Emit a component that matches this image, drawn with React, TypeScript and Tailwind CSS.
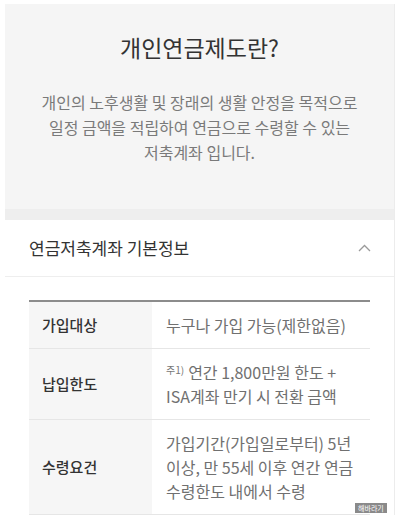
const font = { fontFamily: '"Noto Sans CJK KR", "Noto Sans", sans-serif' };

const rows = [
  { label: "가입대상", lines: ["누구나 가입 가능(제한없음)"] },
  { label: "납입한도", note: "주1)", lines: ["연간 1,800만원 한도 +", "ISA계좌 만기 시 전환 금액"] },
  { label: "수령요건", lines: ["가입기간(가입일로부터) 5년", "이상, 만 55세 이후 연간 연금", "수령한도 내에서 수령"] },
];

export default function App() {
  return (
    <div
      className="relative h-[522px] w-[400px] overflow-hidden bg-white pt-[4px] pl-[5px]"
      style={font}
    >
      <div className="w-[390px] border-r border-[#ececec]">
        {/* intro */}
        <section className="bg-[#f5f5f5] px-2 pt-[27px] pb-[44px] text-center">
          <h1 className="text-[23px] leading-[32px] font-normal text-[#333]">개인연금제도란?</h1>
          <p className="mt-[27px] text-[16px] leading-[25px] text-[#7a7a7a]">
            개인의 노후생활 및 장래의 생활 안정을 목적으로
            <br />
            일정 금액을 적립하여 연금으로 수령할 수 있는
            <br />
            저축계좌 입니다.
          </p>
        </section>
        <div className="h-[11px] bg-[#eeeeee]" />

        {/* accordion header */}
        <div className="flex h-[57px] items-center justify-between border-b border-[#eeeeee] pl-[24px] pr-[23px]">
          <span className="text-[17px] text-[#333]">연금저축계좌 기본정보</span>
          <svg width="13" height="8" viewBox="0 0 13 8" fill="none">
            <path d="M1 7L6.5 1.5L12 7" stroke="#9a9a9a" strokeWidth="1.3" />
          </svg>
        </div>

        {/* table */}
        <div className="px-[24px] pt-[23px]">
          <div className="border-t-2 border-[#8c8c8c]">
            {rows.map((r) => (
              <div key={r.label} className="flex border-b border-[#e6e6e6]">
                <div className="flex w-[123px] shrink-0 items-center bg-[#f6f6f6] pl-[13px] text-[15px] font-medium text-[#333]">
                  {r.label}
                </div>
                <div className="flex-1 py-[11px] pl-[14px] text-[16px] leading-[24px] text-[#707070]">
                  {r.lines.map((l, i) => (
                    <div key={i} className="whitespace-nowrap">
                      {i === 0 && r.note && (
                        <sup className="mr-[4px] text-[10px] text-[#777]">{r.note}</sup>
                      )}
                      {l}
                    </div>
                  ))}
                </div>
              </div>
            ))}
          </div>
        </div>
      </div>

      <span className="absolute left-[355px] top-[503px] bg-[#8a8a8a] px-[3px] text-[7px] leading-[10px] text-white">
        해바라기
      </span>
    </div>
  );
}
